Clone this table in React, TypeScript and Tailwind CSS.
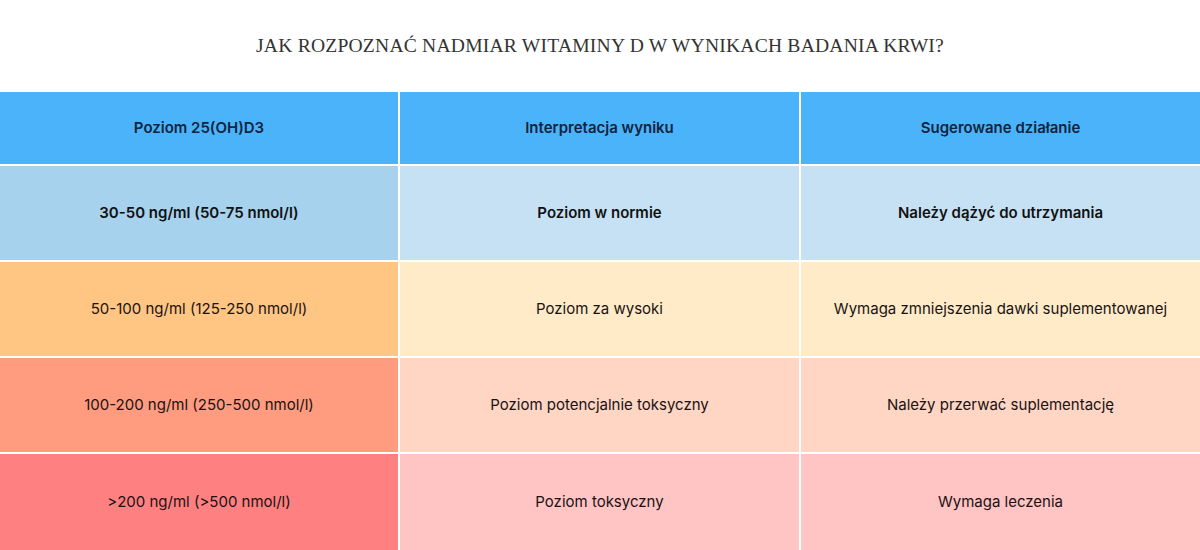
const ROWS = [
  {
    cells: ["30-50 ng/ml (50-75 nmol/l)", "Poziom w normie", "Należy dążyć do utrzymania"],
    first: "bg-[#a7d2ee]",
    rest: "bg-[#c7e1f4]",
    bold: true,
  },
  {
    cells: ["50-100 ng/ml (125-250 nmol/l)", "Poziom za wysoki", "Wymaga zmniejszenia dawki suplementowanej"],
    first: "bg-[#ffc582]",
    rest: "bg-[#ffebc8]",
    bold: false,
  },
  {
    cells: ["100-200 ng/ml (250-500 nmol/l)", "Poziom potencjalnie toksyczny", "Należy przerwać suplementację"],
    first: "bg-[#ff9c80]",
    rest: "bg-[#ffd5c4]",
    bold: false,
  },
  {
    cells: [">200 ng/ml (>500 nmol/l)", "Poziom toksyczny", "Wymaga leczenia"],
    first: "bg-[#ff8080]",
    rest: "bg-[#ffc4c4]",
    bold: false,
  },
];

const HEADERS = ["Poziom 25(OH)D3", "Interpretacja wyniku", "Sugerowane działanie"];

export default function App() {
  return (
    <div className="w-[1200px] h-[550px] bg-white flex flex-col overflow-hidden font-['Inter',sans-serif]">
      <div className="h-[92px] flex items-center justify-center pb-0">
        <h1 className="font-['Liberation_Serif',serif] text-[19.6px] uppercase text-[#333333] tracking-[0.2px]">
          Jak rozpoznać nadmiar witaminy D w wynikach badania krwi?
        </h1>
      </div>
      <div className="grid grid-cols-[398px_399px_399px] grid-rows-[72px_94px_94px_94px_96px] gap-[2px]">
        {HEADERS.map((h) => (
          <div key={h} className="bg-[#4bb3fa] flex items-center justify-center text-[15px] font-semibold text-[#0f2440]">
            {h}
          </div>
        ))}
        {ROWS.map((row) =>
          row.cells.map((c, i) => (
            <div
              key={c}
              className={`${i === 0 ? row.first : row.rest} flex items-center justify-center text-[15px] ${
                row.bold ? "font-semibold text-[#111111]" : "text-[#1a1212]"
              }`}
            >
              {c}
            </div>
          ))
        )}
      </div>
    </div>
  );
}
